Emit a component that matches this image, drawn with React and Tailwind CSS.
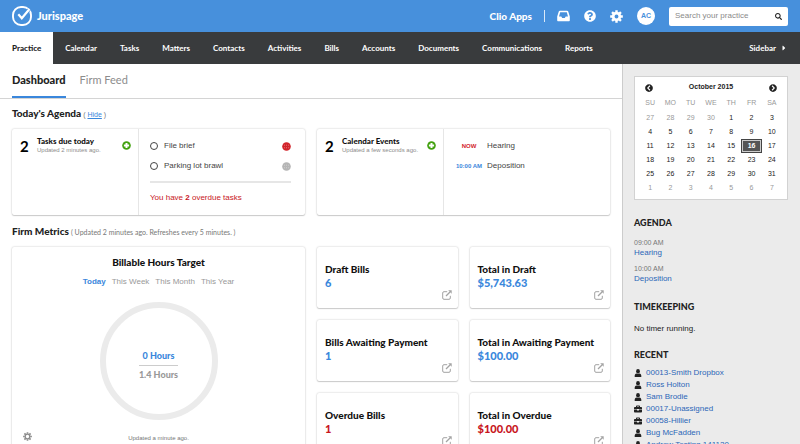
import React from 'react';
import {
  FaBriefcase,
  FaCaretRight,
  FaChevronCircleLeft,
  FaChevronCircleRight,
  FaQuestionCircle,
  FaSearch,
} from 'react-icons/fa';

const NAV = [
  'Calendar', 'Tasks', 'Matters', 'Contacts', 'Activities',
  'Bills', 'Accounts', 'Documents', 'Communications', 'Reports',
];

const WEEKDAYS = ['SU', 'MO', 'TU', 'WE', 'TH', 'FR', 'SA'];

const WEEKS = [
  [27, 28, 29, 30, 1, 2, 3],
  [4, 5, 6, 7, 8, 9, 10],
  [11, 12, 13, 14, 15, 16, 17],
  [18, 19, 20, 21, 22, 23, 24],
  [25, 26, 27, 28, 29, 30, 31],
  [1, 2, 3, 4, 5, 6, 7],
];

const METRICS = [
  { label: 'Draft Bills', value: '6' },
  { label: 'Total in Draft', value: '$5,743.63' },
  { label: 'Bills Awaiting Payment', value: '1' },
  { label: 'Total in Awaiting Payment', value: '$100.00' },
  { label: 'Overdue Bills', value: '1', overdue: true },
  { label: 'Total in Overdue', value: '$100.00', overdue: true },
];

const RECENT = [
  { name: '00013-Smith Dropbox', icon: PersonIcon },
  { name: 'Ross Holton', icon: PersonIcon },
  { name: 'Sam Brodie', icon: PersonIcon },
  { name: '00017-Unassigned', icon: FaBriefcase },
  { name: '00058-Hillier', icon: FaBriefcase },
  { name: 'Bug McFadden', icon: PersonIcon },
  { name: 'Andrew Testing 141120', icon: PersonIcon },
];

function Logo() {
  return (
    <svg viewBox="0 0 20 20" className="size-5" fill="none" aria-hidden="true">
      <rect x="1" y="1" width="18" height="18" rx="8" stroke="#fff" strokeWidth="1.9" />
      <path d="M10 11.800L17.200 3.500" stroke="#4790dc" strokeWidth="3.400" />
      <path d="M6.300 8.300l3.500 3.900L17.500 3" stroke="#fff" strokeWidth="2.2" />
    </svg>
  );
}

function InboxIcon() {
  return (
    <svg viewBox="0 0 13 12" className="h-3 w-[13px]" aria-hidden="true">
      <path
        fillRule="evenodd"
        fill="#fff"
        d="M3 .8h7c.7 0 1.100.3 1.300.9L12.800 6.500v3.700c0 .7-.4 1.100-1.100 1.100H1.300c-.7 0-1.100-.4-1.100-1.100V6.500L1.700 1.700C1.900 1.100 2.300.8 3 .8zM3.200 2.300L2 6.400h2.300l.9 1.700h2.600l.9-1.700H11L9.800 2.300z"
      />
    </svg>
  );
}

// round gear with eight teeth
function GearIcon({ size, ring = 3 }) {
  return (
    <svg viewBox="0 0 14 14" width={size} height={size} fill="none" stroke="currentColor" aria-hidden="true">
      <circle cx="7" cy="7" r="3.6" strokeWidth={ring} />
      <path
        strokeWidth="2.600"
        d="M7 .2v2.600M7 11.200v2.600M.2 7h2.600M11.200 7h2.600M2.200 2.200l1.900 1.900M9.900 9.900l1.900 1.900M2.200 11.800l1.900-1.900M9.900 4.100l1.900-1.900"
      />
    </svg>
  );
}

function PlusIcon() {
  return (
    <svg viewBox="0 0 9 9" className="size-[9px]" aria-hidden="true">
      <circle cx="4.500" cy="4.500" r="4.300" fill="#42a10f" />
      <path d="M4.500 1.900v5.200M1.900 4.500h5.200" stroke="#fff" strokeWidth="2" />
    </svg>
  );
}

function PersonIcon({ size }) {
  return (
    <svg viewBox="0 0 8 8" width={size} height={size} fill="currentColor" aria-hidden="true">
      <ellipse cx="4" cy="2.300" rx="1.900" ry="2.200" />
      <path d="M.7 8V6.800C.7 5.500 1.400 4.700 2.500 4.400c.9.6 2.100.6 3 0C6.600 4.700 7.300 5.500 7.300 6.800V8z" />
    </svg>
  );
}

function OpenIcon() {
  return (
    <svg viewBox="0 0 10 10" className="size-[10px]" fill="none" stroke="#a3a3a3" aria-hidden="true">
      <path d="M5.200 1.700H2A1.300 1.300 0 0 0 .7 3v5A1.300 1.300 0 0 0 2 9.300h5A1.300 1.300 0 0 0 8.300 8V5.800" />
      <path d="M4 6l4-4" strokeWidth="1.200" />
      <path d="M6.200.3h3.500v3.500z" fill="#a3a3a3" stroke="none" />
    </svg>
  );
}

function PriorityDot({ color }) {
  return (
    <svg viewBox="0 0 9 9" className="size-[9px]" aria-hidden="true">
      <circle cx="4.500" cy="4.500" r="4.300" fill={color} />
      <path d="M2 3.200h5.500M2 5.800h5.500" stroke="#fff" strokeOpacity="0.45" strokeWidth="0.9" strokeDasharray="0.9 1.200" />
    </svg>
  );
}

function Header() {
  return (
    <header className="flex h-8 shrink-0 items-center justify-between bg-[#4790dc] px-3 text-white">
      <a href="#" className="flex items-center gap-[5px]">
        <Logo />
        <span className="font-[Lato,sans-serif] text-[11px] font-black">Jurispage</span>
      </a>
      <div className="flex items-center">
        <a href="#" className="font-[Lato,sans-serif] text-[10px] font-black">Clio Apps</a>
        <span className="mx-3 h-3 w-px bg-white/80" />
        <div className="flex items-center gap-[14px]">
          <button type="button" aria-label="Inbox"><InboxIcon /></button>
          <button type="button" aria-label="Help"><FaQuestionCircle size={12} /></button>
          <button type="button" aria-label="Settings"><GearIcon size={13} /></button>
          <button type="button" className="size-[18px] rounded-full bg-white text-[7px] font-bold text-[#4790dc]">AC</button>
          <form className="flex h-[19px] w-[119px] items-center rounded-xs bg-white pr-[6px] pl-[6px]">
            <input
              type="search"
              aria-label="Search your practice"
              placeholder="Search your practice"
              className="min-w-0 flex-1 text-[8px] text-gray-800 outline-none placeholder:text-[#8a8a8a]"
            />
            <button type="button" aria-label="Search"><FaSearch size={7} className="text-[#222]" /></button>
          </form>
        </div>
      </div>
    </header>
  );
}

function Nav() {
  return (
    <nav className="flex h-8 shrink-0 items-stretch justify-between bg-[#393b3d] font-[Lato,sans-serif] text-[8px] font-bold text-white">
      <div className="flex">
        <a href="#" className="flex items-center bg-white px-[12px] font-black text-[#222]">Practice</a>
        {NAV.map((item) => (
          <a key={item} href="#" className="flex items-center pr-[11px] pl-3">{item}</a>
        ))}
      </div>
      <a href="#" className="flex items-center gap-1 px-3">
        Sidebar <FaCaretRight size={8} />
      </a>
    </nav>
  );
}

function SummaryCard({ count, title, updated, children }) {
  return (
    <section className="flex h-[86px] rounded-xs bg-white shadow-[0_0_2px_rgba(0,0,0,0.25),0_1px_1px_rgba(0,0,0,0.15)]">
      <div className="flex w-[127px] shrink-0 items-start border-r border-[#e6e6e6] pt-2 pr-[7px] pl-2">
        <span className="w-[17px] font-[Lato,sans-serif] text-[15px] leading-[18px] font-bold text-black">{count}</span>
        <div className="flex-1 whitespace-nowrap">
          <h3 className="font-[Lato,sans-serif] text-[8px] leading-[9px] font-black text-[#111]">{title}</h3>
          <p className="text-[6px] leading-[8px] text-[#8c8c8c]">{updated}</p>
        </div>
        <button type="button" aria-label="Add" className="pt-1">
          <PlusIcon />
        </button>
      </div>
      <div className="flex-1 pt-[7px] pr-[14px] pl-[11px]">{children}</div>
    </section>
  );
}

function Task({ id, label, color }) {
  return (
    <div className="flex h-5 items-center">
      <input id={id} type="checkbox" className="size-2 appearance-none rounded-full border border-[#444]" />
      <label htmlFor={id} className="ml-[6px] flex-1 text-[8px] text-[#444]">{label}</label>
      <PriorityDot color={color} />
    </div>
  );
}

function BillableHours() {
  return (
    <section className="flex flex-col items-center rounded-xs bg-white pt-[9px] shadow-[0_0_2px_rgba(0,0,0,0.25),0_1px_1px_rgba(0,0,0,0.15)]">
      <h3 className="font-[Lato,sans-serif] text-[10px] leading-3 font-black text-[#111]">Billable Hours Target</h3>
      <div className="mt-2 flex gap-[6px] text-[8px] leading-3 text-[#999]">
        <button type="button" className="font-bold text-[#3a87dc]">Today</button>
        <button type="button">This Week</button>
        <button type="button">This Month</button>
        <button type="button">This Year</button>
      </div>
      <div className="mt-[14px] flex size-[118px] flex-col items-center justify-center rounded-full border-6 border-[#ebebeb] pt-2 font-[Lato,sans-serif] text-[9px] leading-3 font-black">
        <span className="border-b border-[#ccc] px-1 pb-[3px] text-[#3a87dc]">0 Hours</span>
        <span className="pt-[3px] text-[#999]">1.4 Hours</span>
      </div>
      <div className="mt-[10px] grid w-full grid-cols-3 items-center px-[11px] text-[6px] text-[#777]">
        <button type="button" aria-label="Target settings" className="justify-self-start text-[#8c8c8c]">
          <GearIcon size={9} ring={2} />
        </button>
        <span className="pt-1 text-center">Updated a minute ago.</span>
      </div>
    </section>
  );
}

function MetricTile({ label, value, overdue }) {
  return (
    <section className="flex h-[61px] rounded-xs bg-white pt-4 pr-[6px] pb-2 pl-2 shadow-[0_0_2px_rgba(0,0,0,0.25),0_1px_1px_rgba(0,0,0,0.15)]">
      <div className="min-w-0 flex-1 font-[Lato,sans-serif] font-black whitespace-nowrap">
        <h3 className="text-[10px] leading-3 text-[#111]">{label}</h3>
        <p className={overdue ? 'text-[11px] leading-4 text-[#c8161d]' : 'text-[11px] leading-4 text-[#3a87dc]'}>{value}</p>
      </div>
      <button type="button" aria-label={`Open ${label}`} className="self-end"><OpenIcon /></button>
    </section>
  );
}

function MiniCalendar() {
  return (
    <section className="border border-[#d2d2d2] bg-white px-[5px] pt-[3px] pb-1">
      <div className="flex h-[15px] items-center justify-between px-[5px] text-[7px] font-bold text-[#222]">
        <button type="button" aria-label="Previous month"><FaChevronCircleLeft size={8} /></button>
        <span>October 2015</span>
        <button type="button" aria-label="Next month"><FaChevronCircleRight size={8} /></button>
      </div>
      <table className="w-full table-fixed border-collapse text-center text-[7px] leading-[14px]">
        <thead>
          <tr className="h-4 text-[#999]">
            {WEEKDAYS.map((day) => <th key={day} className="p-0 font-normal">{day}</th>)}
          </tr>
        </thead>
        <tbody>
          {WEEKS.map((week, row) => (
            <tr key={row} className="text-[#222]">
              {week.map((day) => {
                const outside = (row === 0 && day > 7) || row === 5;
                if (day === 16) {
                  return (
                    <td key={day} className="p-0">
                      <span className="block border border-[#444] bg-[#555] leading-3 font-bold text-white inset-ring inset-ring-[#ccc]">{day}</span>
                    </td>
                  );
                }
                return <td key={day} className={outside ? 'p-0 text-[#999]' : 'p-0'}>{day}</td>;
              })}
            </tr>
          ))}
        </tbody>
      </table>
    </section>
  );
}

function SideHeading({ children }) {
  return <h2 className="font-[Lato,sans-serif] text-[9px] leading-3 font-black text-[#222]">{children}</h2>;
}

function Sidebar() {
  return (
    <aside className="w-[178px] shrink-0 border-l border-[#ccc] bg-[#ebebeb] pt-3 pr-3 pl-[11px] text-[8px]">
      <MiniCalendar />
      <div className="mt-[17px]">
        <SideHeading>AGENDA</SideHeading>
        <p className="mt-[10px] text-[7px] leading-2 text-[#777]">09:00 AM</p>
        <a href="#" className="block leading-3 text-[#2b67b8]">Hearing</a>
        <p className="mt-[6px] text-[7px] leading-2 text-[#777]">10:00 AM</p>
        <a href="#" className="block leading-3 text-[#2b67b8]">Deposition</a>
      </div>
      <div className="mt-4">
        <SideHeading>TIMEKEEPING</SideHeading>
        <p className="mt-[10px] leading-3 text-[#222]">No timer running.</p>
      </div>
      <div className="mt-[14px]">
        <SideHeading>RECENT</SideHeading>
        <ul className="mt-[6px]">
          {RECENT.map(({ name, icon: Icon }) => (
            <li key={name} className="flex h-3 items-center gap-1 whitespace-nowrap">
              <span className="flex w-2 justify-center text-[#222]"><Icon size={8} /></span>
              <a href="#" className="text-[#2b67b8]">{name}</a>
            </li>
          ))}
        </ul>
      </div>
    </aside>
  );
}

function App() {
  return (
    <div className="flex h-screen flex-col overflow-hidden bg-white font-['Liberation_Sans',Arial,sans-serif]">
      <Header />
      <Nav />
      <div className="flex min-h-0 flex-1">
        <main className="min-w-0 flex-1">
          <div className="flex h-[35px] gap-[14px] border-b border-[#d4d4d4] px-3 font-[Lato,sans-serif] text-[11px]">
            <a href="#" className="flex items-center border-b-2 border-[#3a87dc] font-black text-[#222]">Dashboard</a>
            <a href="#" className="flex items-center border-b-2 border-transparent text-[#8c8c8c]">Firm Feed</a>
          </div>
          <div className="px-3 pt-2">
            <div className="flex h-3 items-baseline gap-[2px] leading-3">
              <h2 className="font-[Lato,sans-serif] text-[10px] font-black text-[#222]">Today's Agenda</h2>
              <span className="text-[7px] text-[#777]">( <a href="#" className="text-[#3a87dc] underline">Hide</a> )</span>
            </div>
            <div className="mt-[10px] grid grid-cols-2 gap-3">
              <SummaryCard count={2} title="Tasks due today" updated="Updated 2 minutes ago.">
                <div className="border-b-2 border-[#e6e6e6] pb-[5px]">
                  <Task id="file-brief" label="File brief" color="#d2232a" />
                  <Task id="parking" label="Parking lot brawl" color="#b5b5b5" />
                </div>
                <p className="mt-[9px] text-[8px] leading-3 text-[#c8161d]">You have <b>2</b> overdue tasks</p>
              </SummaryCard>
              <SummaryCard count={2} title="Calendar Events" updated="Updated a few seconds ago.">
                <div className="flex h-5 items-center gap-1 text-[8px] text-[#444]">
                  <span className="w-7 text-center text-[6px] font-bold text-[#d2232a]">NOW</span>
                  Hearing
                </div>
                <div className="flex h-5 items-center gap-1 text-[8px] text-[#444]">
                  <span className="w-7 text-center text-[6px] font-bold whitespace-nowrap text-[#3a87dc]">10:00 AM</span>
                  Deposition
                </div>
              </SummaryCard>
            </div>
            <div className="mt-[10px] flex h-3 items-baseline gap-[2px] leading-3">
              <h2 className="font-[Lato,sans-serif] text-[10px] font-black text-[#222]">Firm Metrics</h2>
              <span className="font-[Lato,sans-serif] text-[7px] text-[#777]">( Updated 2 minutes ago. Refreshes every 5 minutes. )</span>
            </div>
            <div className="mt-[10px] grid grid-cols-2 gap-3">
              <BillableHours />
              <div className="grid grid-cols-2 gap-3">
                {METRICS.map((metric) => <MetricTile key={metric.label} {...metric} />)}
              </div>
            </div>
          </div>
        </main>
        <Sidebar />
      </div>
    </div>
  );
}

export default App;
